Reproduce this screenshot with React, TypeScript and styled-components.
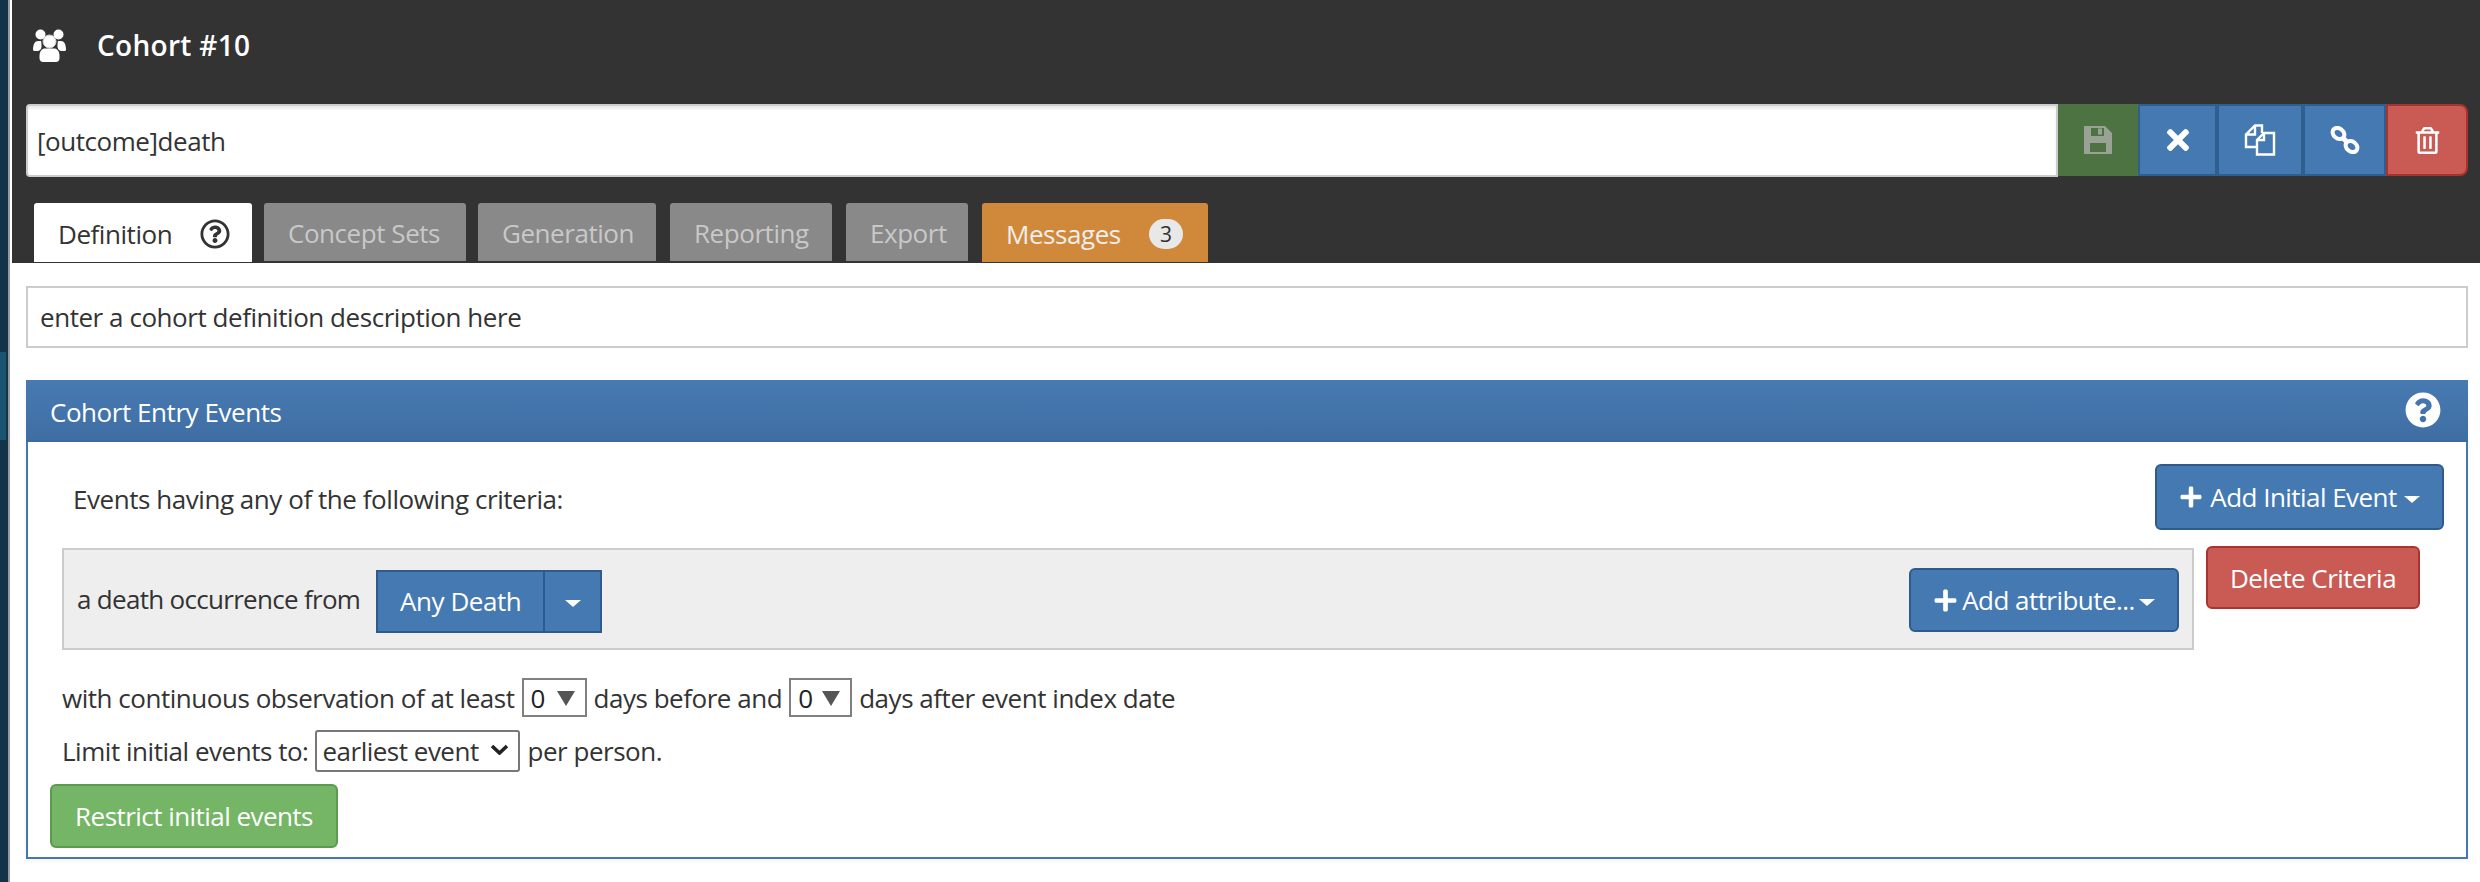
import React from "react";
import styled, { createGlobalStyle } from "styled-components";
import { FaTimes, FaRegTrashAlt, FaQuestionCircle, FaRegQuestionCircle, FaPlus } from "react-icons/fa";

const Global = createGlobalStyle`
  html, body { margin: 0; padding: 0; background: #fff; }
  body { font-family: "Open Sans", "Noto Sans", sans-serif; color: #333; font-size: 26px; letter-spacing: -0.45px; }
  * { box-sizing: border-box; }
`;

const Page = styled.div`
  display: flex;
  width: 2480px;
  height: 882px;
  overflow: hidden;
`;
const Rail = styled.div`
  width: 10px;
  margin-right: 2px;
  flex: none;
  background: #12334a;
  border-right: 2px solid #999;
`;
const RailMark = styled.div`
  width: 6px;
  height: 88px;
  margin-top: 352px;
  background: #1b5470;
`;
const Main = styled.div`
  flex: 1;
  min-width: 0;
  display: flex;
  flex-direction: column;
`;
const Header = styled.header`
  background: #333;
  height: 263px;
  padding-left: 14px;
  display: flex;
  flex-direction: column;
`;
const TitleRow = styled.div`
  height: 90px;
  margin-bottom: 14px;
  display: flex;
  align-items: center;
  color: #fff;
  padding-left: 7px;
  gap: 31px;
`;
const Title = styled.h1`
  margin: 0;
  font-size: 28px;
  font-weight: 600;
  letter-spacing: 0.3px;
`;
const NameRow = styled.div`
  display: flex;
  margin-right: 12px;
  height: 72px;
`;
const NameInput = styled.div`
  flex: 1;
  height: 73px;
  background: #fff;
  border: 2px solid #ccc;
  border-radius: 4px 0 0 4px;
  box-shadow: inset 0 3px 2px rgba(0, 0, 0, 0.075);
  padding: 0 9px;
  display: flex;
  align-items: center;
  color: #333;
`;
const IconButton = styled.button<{ $bg: string; $edge: string; $w: number; $end?: boolean }>`
  width: ${(p) => p.$w}px;
  height: 72px;
  background: ${(p) => p.$bg};
  border: 2px solid ${(p) => p.$edge};
  border-radius: ${(p) => (p.$end ? "0 8px 8px 0" : "0")};
  color: #fff;
  padding: 0;
  display: flex;
  align-items: center;
  justify-content: center;
`;
const Tabs = styled.nav`
  margin-top: 27px;
  padding-left: 8px;
  display: flex;
  align-items: flex-start;
`;
const Tab = styled.div<{ $w: number; $ml: number; $kind: "active" | "muted" | "warn" }>`
  width: ${(p) => p.$w}px;
  margin-left: ${(p) => p.$ml}px;
  height: ${(p) => (p.$kind === "muted" ? 58 : 59)}px;
  border-radius: 3px 3px 0 0;
  background: ${(p) => (p.$kind === "active" ? "#fff" : p.$kind === "warn" ? "#d0893b" : "#898989")};
  color: ${(p) => (p.$kind === "active" ? "#333" : p.$kind === "warn" ? "#eee" : "#c8c8c8")};
  display: flex;
  align-items: center;
  padding: 2px 0 0 24px;
`;
const TabHelp = styled.span`
  margin-left: 28px;
  font-size: 30px;
  display: flex;
  color: #333;
  stroke: currentColor;
  stroke-width: 22px;
`;
const Badge = styled.span`
  margin-left: 28px;
  width: 34px;
  height: 30px;
  border-radius: 15px;
  background: #e8e8e8;
  color: #333;
  font-size: 21px;
  display: flex;
  align-items: center;
  justify-content: center;
`;
const Body = styled.div`
  padding: 23px 12px 0 14px;
  display: flex;
  flex-direction: column;
`;
const Description = styled.div`
  height: 62px;
  border: 2px solid #ccc;
  display: flex;
  align-items: center;
  padding-left: 12px;
`;
const Panel = styled.section`
  margin-top: 32px;
  height: 479px;
  border: 2px solid #4479b0;
  border-top: 0;
  box-shadow: 0 2px 4px rgba(0, 0, 0, 0.05);
`;
const PanelHead = styled.div`
  height: 62px;
  margin: 0 -2px;
  background: linear-gradient(#477ab2, #3f6ea3);
  border-bottom: 2px solid #3a6a9e;
  display: flex;
  align-items: center;
  justify-content: space-between;
  padding: 3px 27px 0 24px;
  color: #fff;
`;
const HeadHelp = styled.span`
  display: flex;
  font-size: 36px;
  margin-top: -3px;
`;
const PanelBody = styled.div`
  padding: 22px 22px 0 22px;
  display: flex;
  flex-direction: column;
`;
const EventsRow = styled.div`
  display: flex;
  align-items: center;
  justify-content: space-between;
  padding-left: 23px;
  height: 66px;
`;
const EventsLabel = styled.span`
  padding-top: 4px;
`;
const Solid = styled.button<{ $w: number; $h: number; $tone: "blue" | "red" | "green"; $gap?: number }>`
  width: ${(p) => p.$w}px;
  height: ${(p) => p.$h}px;
  flex: none;
  border-radius: 6px;
  font-family: inherit;
  font-size: 26px;
  letter-spacing: -0.55px;
  color: #fff;
  padding: 0;
  border: 2px solid ${(p) => (p.$tone === "blue" ? "#2e5a8e" : p.$tone === "red" ? "#aa3530" : "#5b9a4f")};
  background: ${(p) => (p.$tone === "blue" ? "#4479b2" : p.$tone === "red" ? "#c95b54" : "#74b566")};
  display: flex;
  align-items: center;
  justify-content: center;
  gap: ${(p) => p.$gap ?? 0}px;
`;
const AttributeButton = styled(Solid)`
  margin-top: 2px;
`;
const DeleteButton = styled(Solid)`
  margin-top: -2px;
`;
const RestrictButton = styled(Solid)`
  margin-top: 12px;
`;
const Caret = styled.span`
  width: 0;
  height: 0;
  margin-top: 4px;
  border-left: 8px solid transparent;
  border-right: 8px solid transparent;
  border-top: 7px solid #fff;
`;
const CriteriaRow = styled.div`
  display: flex;
  align-items: flex-start;
  gap: 12px;
  margin-top: 18px;
  margin-left: 12px;
`;
const CriteriaBox = styled.div`
  width: 2132px;
  height: 102px;
  background: #eee;
  border: 2px solid #ccc;
  display: flex;
  align-items: center;
  padding: 0 13px;
`;
const CriteriaLabel = styled.span`
  margin-right: 16px;
  letter-spacing: -0.7px;
`;
const Split = styled.div`
  display: flex;
  height: 63px;
  width: 226px;
  margin-top: 4px;
  border: 2px solid #2e5a8e;
  background: #4479b2;
  color: #fff;
`;
const SplitLabel = styled.span`
  flex: 1;
  display: flex;
  align-items: center;
  justify-content: center;
  border-right: 2px solid #2e5a8e;
`;
const SplitCaret = styled.span`
  width: 55px;
  display: flex;
  align-items: center;
  justify-content: center;
`;
const Push = styled.div`
  margin-left: auto;
`;
const Line = styled.div<{ $top: number }>`
  display: flex;
  align-items: center;
  margin: ${(p) => p.$top}px 0 0 12px;
  gap: 7px;
  letter-spacing: -0.47px;
`;
const Num = styled.span<{ $w: number }>`
  width: ${(p) => p.$w}px;
  height: 39px;
  border: 2px solid #808080;
  display: flex;
  align-items: center;
  justify-content: space-between;
  padding: 0 10px 0 7px;
  color: #222;
`;
const Tri = styled.span`
  width: 0;
  height: 0;
  margin-top: 2px;
  border-left: 9px solid transparent;
  border-right: 9px solid transparent;
  border-top: 15px solid #555;
`;
const SelectWrap = styled.span`
  position: relative;
  display: flex;
  width: 205px;
  height: 42px;
`;
const Select = styled.select`
  width: 100%;
  height: 100%;
  appearance: none;
  border: 2px solid #777;
  border-radius: 3px;
  background: #fff;
  color: #333;
  font-family: inherit;
  font-size: 26px;
  letter-spacing: -0.5px;
  padding: 0 5px;
`;
const Chevron = styled.svg`
  position: absolute;
  right: 11px;
  top: 14px;
  pointer-events: none;
`;

const UsersIcon = () => (
  <svg width="33" height="33" viewBox="0 0 33 33" fill="#fff" style={{ flex: "none" }}>
    <circle cx="7.5" cy="5.5" r="5" />
    <circle cx="25.5" cy="5.5" r="5" />
    <path d="M0 21 C0 15 2 12 5 12 H8 C9 17 9 21 5 22 H1 Z" />
    <path d="M33 21 C33 15 31 12 28 12 H25 C24 17 24 21 28 22 H32 Z" />
    <circle cx="16.5" cy="12.5" r="6.5" stroke="#cfcfcf" strokeWidth="1" />
    <path d="M6.5 27 C6.5 22 9 19.5 12 19.5 H21 C24 19.5 26.5 22 26.5 27 V29 C26.5 31.5 25 33 23 33 H10 C8 33 6.5 31.5 6.5 29 Z" />
  </svg>
);
const SaveIcon = () => (
  <svg width="28" height="28" viewBox="0 0 28 28" style={{ color: "#9aa296" }}>
    <path
      fill="currentColor"
      fillRule="evenodd"
      d="M1 0 H21 L28 7 V27 C28 27.6 27.6 28 27 28 H1 C.4 28 0 27.6 0 27 V1 C0 .4 .4 0 1 0 Z M7 2 V10 H20 V2 Z M6 17 V26 H22 V17 Z"
    />
    <rect x="14" y="2.5" width="4" height="6" fill="currentColor" />
  </svg>
);
const CopyIcon = () => (
  <svg width="32" height="32" viewBox="0 0 32 32" fill="none" stroke="currentColor" strokeWidth="2.4">
    <path d="M18 9 V1.5 H11 L2 10.5 V23 H13" />
    <path d="M2 10.5 H11 V1.5" />
    <path d="M20 9 H30 V30.5 H13 V16 Z" />
    <path d="M20 9 V16 H13" />
  </svg>
);
const ChainIcon = () => (
  <svg width="30" height="28" viewBox="0 0 30 28" fill="none" stroke="currentColor" strokeWidth="4">
    <ellipse cx="8.5" cy="7.5" rx="6.4" ry="5" transform="rotate(40 8.5 7.5)" />
    <ellipse cx="21.5" cy="20.5" rx="6.4" ry="5" transform="rotate(40 21.5 20.5)" />
    <path d="M12 11 L18 17" strokeWidth="5" />
  </svg>
);

export default function App() {
  return (
    <Page>
      <Global />
      <Rail>
        <RailMark />
      </Rail>
      <Main>
        <Header>
          <TitleRow>
            <UsersIcon />
            <Title>Cohort #10</Title>
          </TitleRow>
          <NameRow>
            <NameInput>[outcome]death</NameInput>
            <IconButton $bg="#4d7343" $edge="#4d7343" $w={80}>
              <SaveIcon />
            </IconButton>
            <IconButton $bg="#4479b2" $edge="#2e5f8e" $w={79}>
              <FaTimes size={32} />
            </IconButton>
            <IconButton $bg="#4479b2" $edge="#2e5f8e" $w={86}>
              <CopyIcon />
            </IconButton>
            <IconButton $bg="#4479b2" $edge="#2e5f8e" $w={83}>
              <ChainIcon />
            </IconButton>
            <IconButton $bg="#c95b54" $edge="#a8332e" $w={82} $end>
              <FaRegTrashAlt size={27} />
            </IconButton>
          </NameRow>
          <Tabs>
            <Tab $w={218} $ml={0} $kind="active">
              Definition
              <TabHelp>
                <FaRegQuestionCircle />
              </TabHelp>
            </Tab>
            <Tab $w={202} $ml={12} $kind="muted">Concept Sets</Tab>
            <Tab $w={178} $ml={12} $kind="muted">Generation</Tab>
            <Tab $w={162} $ml={14} $kind="muted">Reporting</Tab>
            <Tab $w={122} $ml={14} $kind="muted">Export</Tab>
            <Tab $w={226} $ml={14} $kind="warn">
              Messages
              <Badge>3</Badge>
            </Tab>
          </Tabs>
        </Header>
        <Body>
          <Description>enter a cohort definition description here</Description>
          <Panel>
            <PanelHead>
              Cohort Entry Events
              <HeadHelp>
                <FaQuestionCircle />
              </HeadHelp>
            </PanelHead>
            <PanelBody>
              <EventsRow>
                <EventsLabel>Events having any of the following criteria:</EventsLabel>
                <Solid $w={289} $h={66} $tone="blue" $gap={7}>
                  <FaPlus size={24} />
                  Add Initial Event
                  <Caret />
                </Solid>
              </EventsRow>
              <CriteriaRow>
                <CriteriaBox>
                  <CriteriaLabel>a death occurrence from</CriteriaLabel>
                  <Split>
                    <SplitLabel>Any Death</SplitLabel>
                    <SplitCaret>
                      <Caret />
                    </SplitCaret>
                  </Split>
                  <Push />
                  <AttributeButton $w={270} $h={64} $tone="blue" $gap={4}>
                    <FaPlus size={25} />
                    Add attribute...
                    <Caret />
                  </AttributeButton>
                </CriteriaBox>
                <DeleteButton $w={214} $h={63} $tone="red">Delete Criteria</DeleteButton>
              </CriteriaRow>
              <Line $top={28}>
                with continuous observation of at least
                <Num $w={65}>0<Tri /></Num>
                days before and
                <Num $w={63}>0<Tri /></Num>
                days after event index date
              </Line>
              <Line $top={13}>
                Limit initial events to:
                <SelectWrap>
                  <Select defaultValue="earliest">
                    <option value="earliest">earliest event</option>
                    <option value="all">all events</option>
                  </Select>
                  <Chevron width="19" height="11" viewBox="0 0 19 11" fill="none" stroke="#222" strokeWidth="3.6">
                    <path d="M2 2 L9.5 9 L17 2" />
                  </Chevron>
                </SelectWrap>
                per person.
              </Line>
              <RestrictButton $w={288} $h={64} $tone="green">
                Restrict initial events
              </RestrictButton>
            </PanelBody>
          </Panel>
        </Body>
      </Main>
    </Page>
  );
}
